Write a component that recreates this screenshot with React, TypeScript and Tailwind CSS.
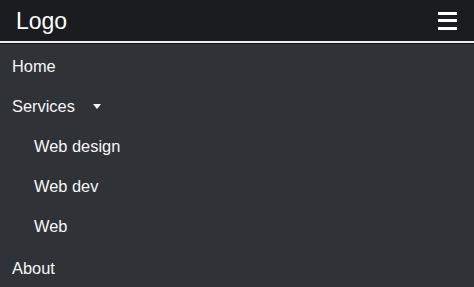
// Mobile nav menu, opened state

const font = { fontFamily: '"Liberation Sans", Arial, sans-serif' };

function Hamburger() {
  return (
    <div className="flex flex-col justify-between w-[19px] h-[18px]">
      <span className="block h-[3px] bg-white" />
      <span className="block h-[3px] bg-white" />
      <span className="block h-[3px] bg-white" />
    </div>
  );
}

function Caret() {
  return (
    <svg width="8" height="5" viewBox="0 0 8 5" className="ml-[18px] mt-[1px]">
      <polygon points="0,0 8,0 4,5" fill="#fff" />
    </svg>
  );
}

export default function App() {
  const sub = ["Web design", "Web dev", "Web"];
  return (
    <div className="w-[474px] h-[287px] overflow-hidden bg-[#2f3237] text-[#f7f7f7]" style={font}>
      {/* header */}
      <div className="h-[41px] bg-[#1b1c20] flex items-center justify-between pl-4 pr-[17px]">
        <span className="text-[23px] leading-none text-white mt-[2px]">Logo</span>
        <Hamburger />
      </div>
      <div className="h-[2px] bg-[#ececec]" />
      <div className="h-[1px] bg-[#17181b]" />

      {/* menu */}
      <ul className="pt-[2px] text-[16.4px]">
        <li className="h-10 flex items-center pl-3">Home</li>
        <li className="h-10 flex items-center pl-3">
          Services <Caret />
        </li>
        {sub.map((s) => (
          <li key={s} className="h-10 flex items-center pl-[34px]">{s}</li>
        ))}
        <li className="h-10 flex items-center pl-3 mt-[2px]">About</li>
      </ul>
    </div>
  );
}
